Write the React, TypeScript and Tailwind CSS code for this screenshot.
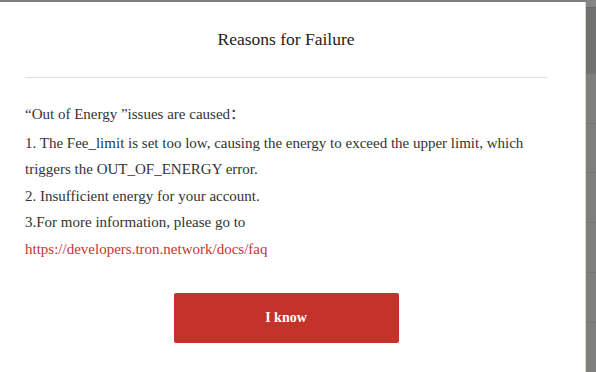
export default function App() {
  return (
    <div className="w-[596px] h-[372px] overflow-hidden bg-[#7f7f7f] flex font-['Liberation_Serif','Noto_Sans_CJK_SC',serif]">
      {/* Modal */}
      <div className="mt-[2px] w-[586px] shrink-0 bg-white border-r border-[#ddd6cb] pl-[25px] pr-[38px]">
        <h2 className="pt-[27px] text-[17.5px] leading-[20px] text-center text-[#222]">
          Reasons for Failure
        </h2>
        <div className="mt-[28px] h-px bg-[#e3dfda]" />

        <div className="pt-[23px] text-[15px] leading-[26.6px] text-[#333]">
          <p className="mb-[2px]">“Out of Energy ”issues are caused：</p>
          <p>
            1. The Fee_limit is set too low, causing the energy to exceed the upper limit, which
            triggers the OUT_OF_ENERGY error.
          </p>
          <p>2. Insufficient energy for your account.</p>
          <p>3.For more information, please go to</p>
          <a href="#" className="block text-[#c23631]">
            https://developers.tron.network/docs/faq
          </a>
        </div>

        <div className="mt-[30px] flex justify-center">
          <button className="w-[225px] h-[50px] rounded-[2px] bg-[#c43229] text-white text-[14px] font-bold">
            I know
          </button>
        </div>
      </div>

      {/* Page behind the overlay */}
      <div className="flex-1 flex flex-col">
        <div className="h-[8px] bg-[#858585]" />
        <div className="h-[75px] bg-[#717171] border-t border-[#6a6a6a]" />
        <div className="h-[57px] border-t border-[#757575]" />
        <div className="h-[57px] border-t border-[#757575]" />
        <div className="h-[57px] border-t border-[#757575]" />
        <div className="h-[57px] border-t border-[#757575]" />
        <div className="h-[57px] border-t border-[#757575]" />
        <div className="h-[57px] border-t border-[#757575]" />
      </div>
    </div>
  );
}
